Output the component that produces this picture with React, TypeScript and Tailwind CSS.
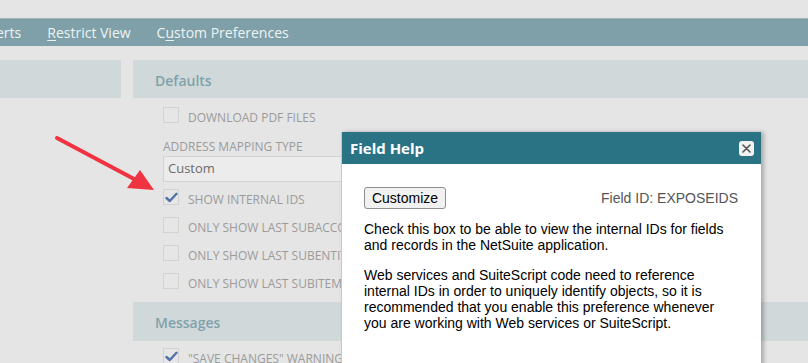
import React from 'react';

const ui = { fontFamily: '"Open Sans", "Liberation Sans", sans-serif' };
const arial = { fontFamily: '"Liberation Sans", Arial, sans-serif' };

function Check({ checked }: { checked?: boolean }) {
  return (
    <span className="flex h-[16px] w-[16px] shrink-0 items-center justify-center border border-[#d2d2d2] bg-[#e6e6e6]">
      {checked && (
        <svg width="13" height="11" viewBox="0 0 13 11">
          <path d="M1.5 6 L4.8 9 L11.5 1.8" fill="none" stroke="#4f72a8" strokeWidth="2.4" strokeLinecap="round" strokeLinejoin="round" />
        </svg>
      )}
    </span>
  );
}

function Row({ label, checked }: { label: string; checked?: boolean }) {
  return (
    <div className="flex h-[28px] items-center gap-[9px] whitespace-nowrap">
      <Check checked={checked} />
      <span className="pt-[6px] text-[12px] uppercase text-[#9b9b9b]">{label}</span>
    </div>
  );
}

export default function App() {
  return (
    <div className="relative h-[363px] w-[808px] overflow-hidden bg-[#e5e5e5]" style={ui}>
      <div className="h-[18px]" />
      <nav className="flex h-[28px] items-center whitespace-nowrap border-t border-[#9fb4b9] bg-[#7fa0a8] text-[14px] text-[#eef3f4]">
        <span className="ml-[-4px]">erts</span>
        <span className="ml-[26px]">
          <span className="underline underline-offset-2">R</span>estrict View
        </span>
        <span className="ml-[26px]">
          C<span className="underline underline-offset-2">u</span>stom Preferences
        </span>
      </nav>

      <div className="mt-[14px] flex gap-[12px]">
        <div className="h-[38px] w-[121px] bg-[#d0d8da]" />
        <div className="flex-1">
          <div className="flex h-[38px] items-center bg-[#d0d8da] pl-[22px] pt-[2px] text-[14px] font-semibold text-[#80a2aa]">
            Defaults
          </div>
          <div className="pl-[30px] pt-[3px]">
            <Row label="Download PDF Files" />
            <div className="mt-[11px] h-[14px] text-[12px] leading-[14px] uppercase text-[#9b9b9b]">
              Address Mapping Type
            </div>
            <div className="mt-[2px] flex h-[26px] w-[230px] items-center border border-[#d3d3d3] bg-[#ececec] pl-[4px] text-[13px] text-[#6b6b6b]">
              Custom
            </div>
            <div className="h-[1px]" />
            <Row label="Show Internal IDs" checked />
            <Row label="Only Show Last Subaccount" />
            <Row label="Only Show Last Subentity" />
            <Row label="Only Show Last Subitem" />
          </div>
          <div className="mt-[7px] flex h-[39px] items-center bg-[#d0d8da] pl-[22px] pt-[2px] text-[14px] font-semibold text-[#80a2aa]">
            Messages
          </div>
          <div className="pl-[30px] pt-[1px]">
            <Row label={'"Save Changes" Warning'} checked />
          </div>
        </div>
      </div>

      <svg className="absolute left-0 top-0" width="170" height="200" viewBox="0 0 170 200">
        <line x1="57" y1="138" x2="136" y2="180" stroke="#ef3340" strokeWidth="4" strokeLinecap="round" />
        <polygon points="154,190 140,170 127,188" fill="#ef3340" />
      </svg>

      <div className="absolute left-[341px] top-[132px] h-[260px] w-[420px] border-l border-[#c8c8c8] bg-white shadow-[3px_0_4px_rgba(0,0,0,0.25)]">
        <div className="flex h-[32px] items-center justify-between bg-[#2a7385] pl-[8px] pr-[7px]">
          <span className="text-[15px] font-bold text-white">Field Help</span>
          <span className="flex h-[15px] w-[15px] items-center justify-center rounded-[3px] bg-[#f2f2f2]">
            <svg width="9" height="9" viewBox="0 0 9 9">
              <path d="M1 1 L8 8 M8 1 L1 8" stroke="#555" strokeWidth="1.6" strokeLinecap="round" />
            </svg>
          </span>
        </div>
        <div className="pl-[22px] pr-[23px] pt-[23px] text-[14px] leading-[16px] text-black" style={arial}>
          <div className="flex items-center justify-between">
            <span className="flex h-[22px] w-[82px] items-center justify-center rounded-[3px] border border-[#8f8f8f] bg-[#f1f1f1]">
              Customize
            </span>
            <span className="text-[#555]">Field ID: EXPOSEIDS</span>
          </div>
          <p className="mt-[12px]">
            Check this box to be able to view the internal IDs for fields and records in the NetSuite application.
          </p>
          <p className="mt-[14px] pr-[20px]">
            Web services and SuiteScript code need to reference internal IDs in order to uniquely identify objects, so it is recommended that you enable this preference whenever you are working with Web services or SuiteScript.
          </p>
        </div>
      </div>
    </div>
  );
}
